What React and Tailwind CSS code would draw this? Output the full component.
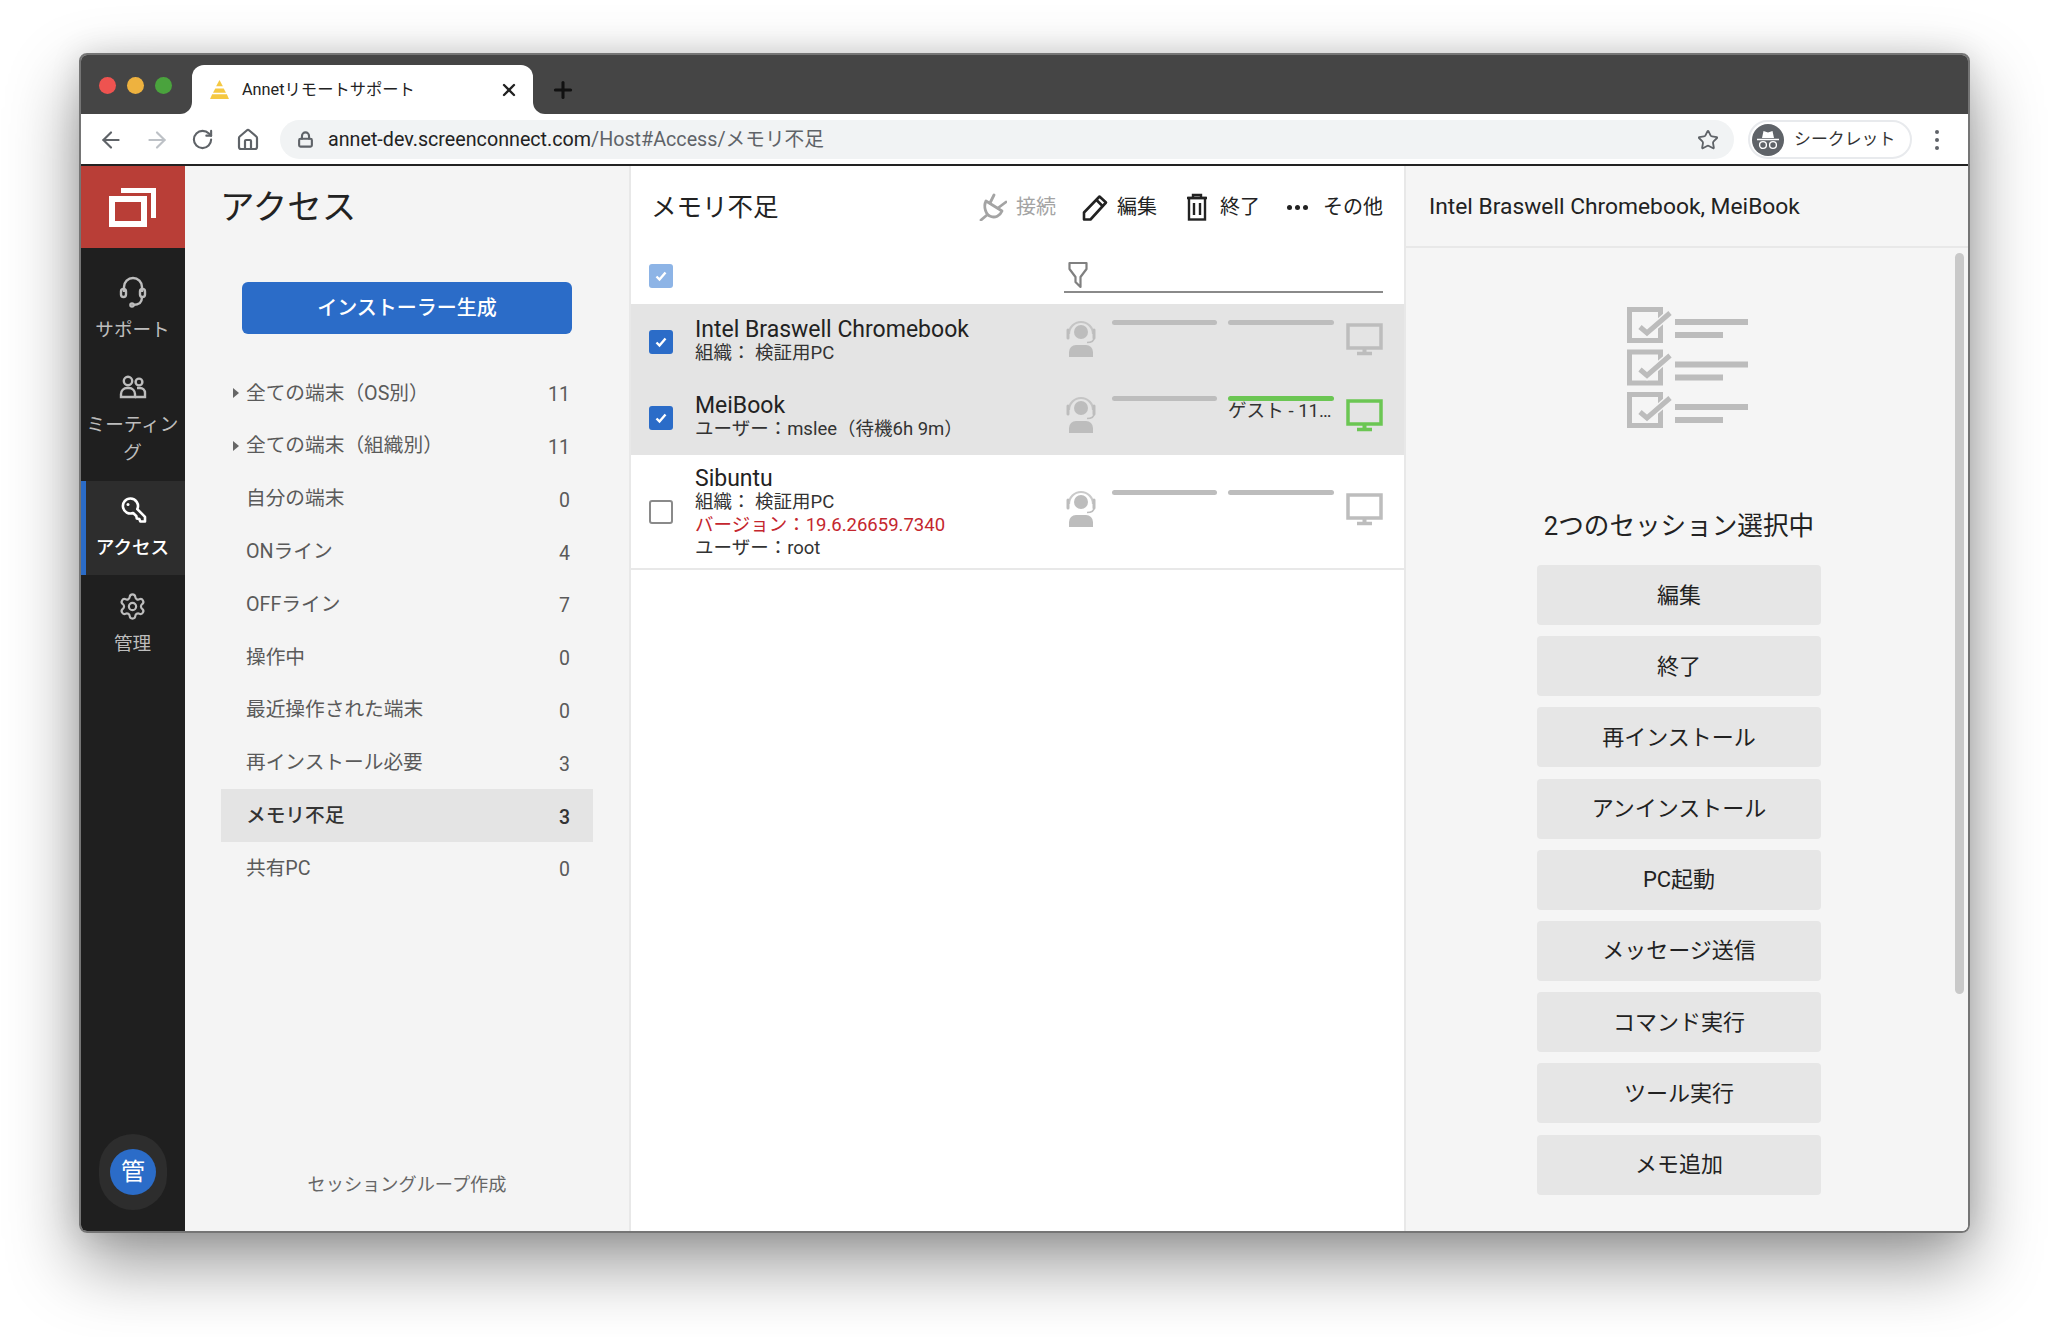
import React from "react";
import { ArrowLeft, ArrowRight, RotateCw, House, Star, X, Plus, Settings, Lock } from "lucide-react";

const groups = [
  { label: "全ての端末（OS別）", count: 11, caret: true },
  { label: "全ての端末（組織別）", count: 11, caret: true },
  { label: "自分の端末", count: 0 },
  { label: "ONライン", count: 4 },
  { label: "OFFライン", count: 7 },
  { label: "操作中", count: 0 },
  { label: "最近操作された端末", count: 0 },
  { label: "再インストール必要", count: 3 },
  { label: "メモリ不足", count: 3, active: true },
  { label: "共有PC", count: 0 },
];

const actions = ["編集", "終了", "再インストール", "アンインストール", "PC起動", "メッセージ送信", "コマンド実行", "ツール実行", "メモ追加"];

const HeadsetIcon = () => (
  <svg width="30" height="34" viewBox="0 0 30 34" fill="none" stroke="currentColor" strokeWidth="2.4">
    <path d="M6 17V12a9 9 0 0 1 18 0v5" />
    <rect x="3" y="14" width="5" height="8" rx="2.5" />
    <rect x="22" y="14" width="5" height="8" rx="2.5" />
    <path d="M24 22c0 6-3 8-9 8" />
    <circle cx="14" cy="30" r="1.6" />
  </svg>
);

const UsersIcon = () => (
  <svg width="28" height="24" viewBox="0 0 28 24" fill="none" stroke="currentColor" strokeWidth="2.4">
    <circle cx="9" cy="6" r="4.2" />
    <circle cx="20" cy="7" r="3.4" />
    <path d="M2 22v-3a6 6 0 0 1 6-6h2a6 6 0 0 1 6 6v3z" />
    <path d="M18 13h3a5 5 0 0 1 5 5v4h-10" />
  </svg>
);

const KeyIcon = () => (
  <svg width="28" height="28" viewBox="0 0 28 28" fill="none" stroke="currentColor" strokeWidth="2.6" strokeLinejoin="round">
    <path d="M11.5 2.5a7.5 7.5 0 0 1 6.8 10.6l7.7 7.7v4.7h-4.7l-1-2.5-2.5-.5-.5-2.5-3.2-3a7.5 7.5 0 1 1-2.6-14.500z" />
    <circle cx="9" cy="8.500" r="1.500" fill="currentColor" stroke="none" />
  </svg>
);

const LogoIcon = () => (
  <svg width="47" height="39" viewBox="0 0 47 39" fill="none" stroke="#fff">
    <rect x="3" y="11" width="32" height="25" strokeWidth="6" />
    <path d="M12 2.500H44.500V30" strokeWidth="5" />
  </svg>
);

const PlugIcon = () => (
  <svg width="28" height="28" viewBox="0 0 28 28" fill="none" stroke="currentColor" strokeWidth="2.800" strokeLinecap="round" strokeLinejoin="round">
    <path d="M7 8l16 10c-2 5-7 7-11 5.500C7 22 4 14 7 8z" />
    <path d="M11 10l4-8M19 15l8-6" />
    <path d="M8 22l-6 5" />
  </svg>
);

const PencilIcon = () => (
  <svg width="26" height="27" viewBox="0 0 26 27" fill="none" stroke="currentColor" strokeWidth="2.600" strokeLinejoin="round">
    <path d="M2 25.500v-7L17.500 2.500l6.500 6L8.500 25.500z" />
    <path d="M14.500 6l6 6" />
  </svg>
);

const TrashIcon = () => (
  <svg width="22" height="28" viewBox="0 0 22 28" fill="none" stroke="currentColor" strokeWidth="2.4">
    <path d="M1 5h20M7 5V2h8v3" />
    <rect x="3" y="5" width="16" height="21.500" />
    <path d="M8 10v12M14 10v12" />
  </svg>
);

const FunnelIcon = () => (
  <svg width="20" height="28" viewBox="0 0 20 28" fill="none" stroke="#808080" strokeWidth="2.200" strokeLinejoin="round">
    <path d="M1.500 2h17v6l-6 8v10l-5-5v-5l-6-8z" />
  </svg>
);

const PersonIcon = () => (
  <svg width="34" height="40" viewBox="0 0 34 40" className="text-[#bdbdbd]">
    <circle cx="17" cy="14" r="7" fill="currentColor" />
    <path d="M5 16a12 12 0 0 1 24 0" fill="none" stroke="currentColor" strokeWidth="2.200" opacity="0.8" />
    <path d="M4 12v8M30 12v8" stroke="currentColor" strokeWidth="3" strokeLinecap="round" />
    <path d="M30 20c0 3-3 4.500-7 4.500" fill="none" stroke="currentColor" strokeWidth="1.600" />
    <path d="M5 39v-5a7 7 0 0 1 7-7h10a7 7 0 0 1 7 7v5z" fill="currentColor" />
  </svg>
);

const MonitorIcon = ({ green }) => (
  <svg width="37" height="33" viewBox="0 0 37 33" fill="none" stroke={green ? "#6bc653" : "#bdbdbd"}>
    <rect x="2" y="2" width="33" height="23" strokeWidth="3.500" />
    <path d="M18.500 25v4" strokeWidth="4" />
    <path d="M11 30.500h15" strokeWidth="3.500" />
  </svg>
);

const IncognitoIcon = () => (
  <svg width="24" height="20" viewBox="0 0 24 20" fill="none">
    <path d="M6 8l1.500-7 4.500 1.500L16.500 1 18 8z" fill="#fff" />
    <path d="M1 9.500h22" stroke="#fff" strokeWidth="1.600" />
    <circle cx="7" cy="15" r="3.400" stroke="#fff" strokeWidth="1.400" />
    <circle cx="17" cy="15" r="3.400" stroke="#fff" strokeWidth="1.400" />
  </svg>
);

const Tick = ({ bg }) => (
  <span className={`flex h-[24px] w-[24px] shrink-0 items-center justify-center rounded-[3px] ${bg}`}>
    <svg width="12" height="12" viewBox="0 0 12 12" fill="none" stroke="#fff" strokeWidth="2.400">
      <path d="M1.500 6.500l3 3 6-7" />
    </svg>
  </span>
);

const ChecklistIcon = () => (
  <svg width="124" height="122" viewBox="0 0 124 122" fill="none">
    {[0, 42.5, 85].map((y) => (
      <g key={y} transform={`translate(0 ${y})`}>
        <rect x="2.500" y="2.500" width="31" height="31" stroke="#bcbcbc" strokeWidth="5" />
        <path d="M13 20l7 6L43 6" stroke="#f5f5f5" strokeWidth="8" />
        <path d="M13 20l7 6L43 6" stroke="#bcbcbc" strokeWidth="5" />
        <rect x="48" y="12" width="73" height="6" fill="#bcbcbc" />
        <rect x="48" y="25" width="48" height="6" fill="#bcbcbc" />
      </g>
    ))}
  </svg>
);

const SessionRow = ({ children, selected, checked, guest, className }) => (
  <div className={`flex items-center pl-[18px] pr-[21px] ${selected ? "bg-[#e4e4e4]" : ""} ${className}`}>
    {checked ? (
      <Tick bg="bg-[#2b6cc8]" />
    ) : (
      <span className="h-[24px] w-[24px] shrink-0 rounded-[3px] border-2 border-[#8a8a8a] bg-white" />
    )}
    <div className="ml-[22px] w-[369px] shrink-0">{children}</div>
    <div className="flex h-[44px] flex-1 items-start">
      <div className="-mt-[2px] flex w-[34px] shrink-0 justify-center">
        <PersonIcon />
      </div>
      <div className="ml-[14px] h-[5px] w-[105px] shrink-0 rounded-full bg-[#bdbdbd]" />
      <div className="ml-[11px] w-[106px] shrink-0">
        <div className={`h-[5px] rounded-full ${guest ? "bg-[#6bc653]" : "bg-[#bdbdbd]"}`} />
        {guest && <div className="truncate text-[18.600px] leading-[20px] text-[#333]">ゲスト - 11…</div>}
      </div>
      <div className="ml-auto mt-[3px]">
        <MonitorIcon green={guest} />
      </div>
    </div>
  </div>
);

export default function App() {
  return (
    <div className="h-[1337px] w-[2048px] overflow-hidden bg-white pl-[79px] pt-[53px] font-[Roboto,'Noto_Sans_CJK_JP',sans-serif] text-[#222]">
      <div className="flex h-[1180px] w-[1891px] flex-col overflow-hidden rounded-[8px] border-2 border-[#757575] shadow-[0_30px_70px_rgba(0,0,0,0.42),0_0_30px_rgba(0,0,0,0.12)]">
        {/* tab strip */}
        <div className="flex h-[59px] shrink-0 items-end bg-[#454545]">
          <div className="flex h-[49px] items-center gap-[11px] self-end pb-[8px] pl-[18px]">
            <span className="h-[17px] w-[17px] rounded-full bg-[#ee5350]" />
            <span className="h-[17px] w-[17px] rounded-full bg-[#eeb23f]" />
            <span className="h-[17px] w-[17px] rounded-full bg-[#4aa33d]" />
          </div>
          <div className="relative ml-[20px] flex h-[49px] w-[341px] items-center rounded-t-[12px] bg-white pl-[16px] pr-[14px]">
            <span className="absolute bottom-0 -left-[12px] h-[12px] w-[12px] bg-white">
              <span className="block h-full w-full rounded-br-[12px] bg-[#454545]" />
            </span>
            <span className="absolute bottom-0 -right-[12px] h-[12px] w-[12px] bg-white">
              <span className="block h-full w-full rounded-bl-[12px] bg-[#454545]" />
            </span>
            <svg width="23" height="21" viewBox="0 0 20 20">
              <path d="M10 1l3.200 6H6.800z" fill="#f5c842" />
              <path d="M6 9h8l2.200 4H3.800z" fill="#f5c842" />
              <path d="M3 14.500h14l2 4.500H1z" fill="#f5c842" />
            </svg>
            <span className="ml-[11px] mt-[1px] flex-1 text-[16.300px] text-[#222]">Annetリモートサポート</span>
            <X size={20} strokeWidth={2.8} className="text-[#222]" />
          </div>
          <Plus size={26} strokeWidth={2.800} className="mb-[11px] ml-[17px] text-[#111]" />
        </div>

        {/* toolbar */}
        <div className="flex h-[52px] shrink-0 items-center border-b-2 border-[#222] bg-white pl-[17px] pt-[1px]">
          <ArrowLeft size={26} strokeWidth={2} className="text-[#5f6368]" />
          <ArrowRight size={26} strokeWidth={2} className="ml-[20px] text-[#bdc1c6]" />
          <RotateCw size={23} strokeWidth={2.200} className="ml-[21px] text-[#5f6368]" />
          <House size={24} strokeWidth={2.200} className="ml-[22px] text-[#5f6368]" />
          <div className="ml-[20px] flex h-[39px] w-[1454px] items-center rounded-full bg-[#f1f3f4] pl-[17px] pr-[15px]">
            <Lock size={17} strokeWidth={3} className="text-[#5f6368]" />
            <span className="ml-[14px] flex-1 text-[19.700px] text-[#222]">
              annet-dev.screenconnect.com<span className="text-[#5f6368]">/Host#Access/メモリ不足</span>
            </span>
            <Star size={22} strokeWidth={2} className="text-[#5f6368]" />
          </div>
          <div className="ml-[14px] flex h-[39px] w-[164px] items-center rounded-full border-2 border-[#e8eaed] pl-[2px]">
            <span className="flex h-[32px] w-[32px] items-center justify-center rounded-full bg-[#5f6368]">
              <IncognitoIcon />
            </span>
            <span className="ml-[10px] text-[16.900px] text-[#333]">シークレット</span>
          </div>
          <div className="ml-[23px] flex flex-col gap-[4px]">
            <span className="h-[4px] w-[4px] rounded-full bg-[#5f6368]" />
            <span className="h-[4px] w-[4px] rounded-full bg-[#5f6368]" />
            <span className="h-[4px] w-[4px] rounded-full bg-[#5f6368]" />
          </div>
        </div>

        {/* app */}
        <div className="flex min-h-0 flex-1">
          {/* nav rail */}
          <nav className="flex w-[104px] shrink-0 flex-col bg-[#1f1f1f] text-[#bdbdbd]">
            <div className="flex h-[82px] shrink-0 items-center justify-center bg-[#b93e37] pr-[1px]">
              <LogoIcon />
            </div>
            <div className="mt-[13px] flex h-[97px] flex-col items-center pr-[1px] pt-[14px]">
              <HeadsetIcon />
              <span className="mt-[9px] text-[18.600px] leading-[24px]">サポート</span>
            </div>
            <div className="flex h-[123px] flex-col items-center pr-[1px] pt-[17px]">
              <UsersIcon />
              <span className="mt-[12px] w-[94px] text-center text-[18.600px] leading-[28px]">ミーティング</span>
            </div>
            <div className="flex h-[94px] flex-col items-center border-l-[5px] border-[#2b6cc8] bg-[#2d2d2d] pr-[6px] pt-[15px] text-white">
              <KeyIcon />
              <span className="mt-[12px] text-[18.600px] font-medium leading-[24px]">アクセス</span>
            </div>
            <div className="flex h-[94px] flex-col items-center pr-[1px] pt-[17px]">
              <Settings size={29} strokeWidth={1.800} />
              <span className="mt-[11px] text-[18.600px] leading-[24px]">管理</span>
            </div>
            <div className="mt-auto mb-[21px] flex h-[76px] w-[68px] items-center justify-center self-center rounded-full bg-[#2d2d2d]">
              <span className="flex h-[46px] w-[46px] items-center justify-center rounded-full bg-[#2b6cc8] text-[24px] text-white">管</span>
            </div>
          </nav>

          {/* session groups */}
          <aside className="flex w-[446px] shrink-0 flex-col border-r-2 border-[#e8e8e8] bg-[#f4f4f4] pl-[36px] pr-[36px]">
            <h1 className="-ml-[1px] mt-[18px] text-[34.500px] font-normal leading-[46px] text-[#222]">アクセス</h1>
            <button className="mx-auto mt-[52px] h-[52px] w-[330px] rounded-[6px] bg-[#2b6cc8] text-[20px] font-medium text-white">
              インストーラー生成
            </button>
            <ul className="mt-[33px]">
              {groups.map((g) => (
                <li
                  key={g.label}
                  className={`relative flex h-[52.800px] items-center pl-[25px] pr-[23px] text-[19.700px] ${
                    g.active ? "bg-[#e4e4e4] font-medium text-[#333]" : "text-[#5a5a5a]"
                  }`}
                >
                  {g.caret && (
                    <span className="absolute left-[12px] top-1/2 -mt-[5px] border-y-[5px] border-l-[6px] border-y-transparent border-l-[#666]" />
                  )}
                  <span className="flex-1">{g.label}</span>
                  <span className="mt-[3px] text-[19.500px]">{g.count}</span>
                </li>
              ))}
            </ul>
            <div className="mt-auto mb-[33px] text-center text-[18.200px] text-[#666]">セッショングループ作成</div>
          </aside>

          {/* session list */}
          <section className="flex w-[775px] shrink-0 flex-col border-r-2 border-[#e8e8e8] bg-white">
            <div className="flex h-[82px] shrink-0 items-center pl-[20px] pr-[21px]">
              <h2 className="flex-1 text-[25.500px] font-normal text-[#222]">メモリ不足</h2>
              <div className="flex items-center text-[#a4a4a4]">
                <PlugIcon />
                <span className="ml-[9px] text-[20px]">接続</span>
              </div>
              <div className="ml-[26px] flex items-center text-[#222]">
                <PencilIcon />
                <span className="ml-[9px] text-[20px]">編集</span>
              </div>
              <div className="ml-[29px] flex items-center text-[#222]">
                <TrashIcon />
                <span className="ml-[12px] text-[20px]">終了</span>
              </div>
              <div className="ml-[27px] flex items-center text-[#222]">
                <span className="flex gap-[3px]">
                  <span className="h-[5px] w-[5px] rounded-full bg-[#222]" />
                  <span className="h-[5px] w-[5px] rounded-full bg-[#222]" />
                  <span className="h-[5px] w-[5px] rounded-full bg-[#222]" />
                </span>
                <span className="ml-[15px] text-[20px]">その他</span>
              </div>
            </div>
            <div className="flex h-[56px] shrink-0 items-center pl-[18px] pr-[21px]">
              <Tick bg="bg-[#8db4e6]" />
              <div className="-mt-[5px] ml-[391px] flex h-[38px] flex-1 items-end border-b-2 border-[#8a8a8a] pb-[2px] pl-[4px]">
                <FunnelIcon />
              </div>
            </div>
            <SessionRow selected checked className="h-[76px]">
              <div className="-mt-[3px] text-[23px] leading-[25px] text-[#222]">Intel Braswell Chromebook</div>
              <div className="text-[18.500px] leading-[22px] text-[#333]">組織： 検証用PC</div>
            </SessionRow>
            <SessionRow selected checked guest className="h-[75px]">
              <div className="-mt-[3px] text-[23px] leading-[25px] text-[#222]">MeiBook</div>
              <div className="text-[18.500px] leading-[22px] text-[#333]">ユーザー：mslee（待機6h 9m）</div>
            </SessionRow>
            <SessionRow className="mt-[1px] h-[114px] border-b-2 border-[#e8e8e8]">
              <div className="mt-[2px] text-[23px] leading-[24px] text-[#222]">Sibuntu</div>
              <div className="text-[18.500px] leading-[23px] text-[#333]">組織： 検証用PC</div>
              <div className="text-[18.500px] leading-[23px] text-[#c4262e]">バージョン：19.6.26659.7340</div>
              <div className="text-[18.500px] leading-[23px] text-[#333]">ユーザー：root</div>
            </SessionRow>
          </section>

          {/* selection panel */}
          <section className="flex min-w-0 flex-1 flex-col bg-[#f5f5f5]">
            <div className="flex h-[82px] shrink-0 items-center border-b-2 border-[#e8e8e8] pl-[23px] pt-[2px] text-[22.800px] text-[#222]">
              Intel Braswell Chromebook, MeiBook
            </div>
            <div className="flex min-h-0 flex-1">
              <div className="flex w-[546px] flex-col items-center">
                <div className="ml-[19px] mt-[59px]">
                  <ChecklistIcon />
                </div>
                <div className="mt-[79px] text-[25.600px] leading-[36px] text-[#222]">2つのセッション選択中</div>
                <div className="mt-[21px] flex w-[284px] flex-col gap-[11.200px]">
                  {actions.map((a) => (
                    <div key={a} className="flex h-[60px] items-center justify-center rounded-[4px] bg-[#e6e6e6] text-[22px] text-[#222]">
                      {a}
                    </div>
                  ))}
                </div>
              </div>
              <div className="ml-[3px] mt-[5px] h-[741px] w-[9px] rounded-full bg-[#c9c9c9]" />
            </div>
          </section>
        </div>
      </div>
    </div>
  );
}
